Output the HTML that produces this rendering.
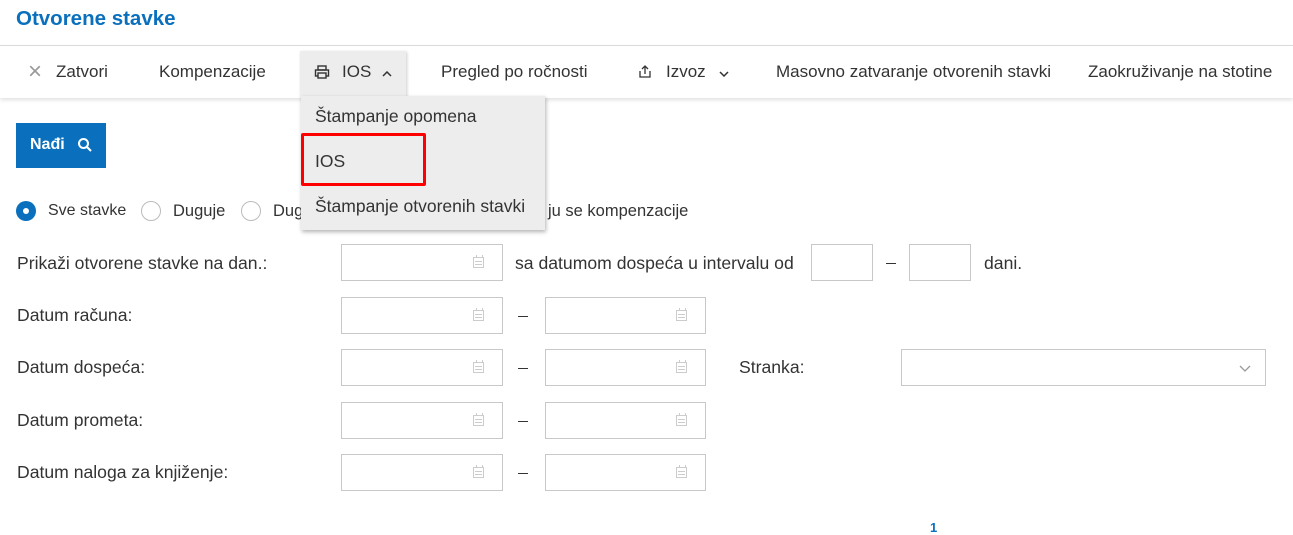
<!DOCTYPE html><html><head><style>
body{margin:0;width:1293px;height:530px;background:#fff;font-family:"Liberation Sans",sans-serif;color:#333;position:relative;overflow:hidden}
.a{position:absolute;white-space:nowrap}
.t{font-size:17px;line-height:20px}
.l{font-size:17.6px;line-height:20px}
.in{position:absolute;border:1px solid #c8c8c8;background:#fff;box-sizing:border-box;height:37px}
.cal{position:absolute;right:18px;top:12px;width:11px;height:11px;border:1px solid #ccc;box-sizing:border-box}
.cal:before{content:"";position:absolute;left:1px;right:1px;top:3px;height:1px;background:#ccc;box-shadow:0 3px 0 #ccc}
.cal:after{content:"";position:absolute;left:2px;top:-3px;width:5px;height:2px;border-left:1px solid #ccc;border-right:1px solid #ccc}
.dash{position:absolute;width:10px;height:1px;background:#333}
</style></head><body>
<div class="a" style="left:16px;top:7px;font-size:20.5px;font-weight:bold;color:#0a70bd">Otvorene stavke</div>
<div class="a" style="left:0;top:45px;width:1293px;height:1px;background:#ddd"></div>
<div class="a" style="left:0;top:46px;width:1293px;height:52px;background:#fff;box-shadow:0 2px 4px rgba(0,0,0,.12)"></div>
<div class="a" style="left:300px;top:51px;width:106px;height:46px;background:#ededed;box-shadow:1px 1px 3px rgba(0,0,0,.2)"></div>
<div class="a" style="left:28px;top:60px;color:#999;font-size:24px;line-height:24px">×</div>
<div class="a t" style="left:56px;top:62px">Zatvori</div>
<div class="a t" style="left:159px;top:62px">Kompenzacije</div>
<svg class="a" style="left:314px;top:65px" width="16" height="14" viewBox="0 0 16 14" fill="none" stroke="#333" stroke-width="1.4"><rect x="4" y="1" width="8" height="4"/><rect x="1.5" y="5" width="13" height="6"/><rect x="4" y="8" width="8" height="5" fill="#ededed"/></svg>
<div class="a t" style="left:342px;top:62px">IOS</div>
<svg class="a" style="left:382px;top:71px" width="10" height="6"><path d="M1 5L5 1L9 5" stroke="#333" fill="none" stroke-width="1.5"/></svg>
<div class="a t" style="left:441px;top:62px">Pregled po ročnosti</div>
<svg class="a" style="left:638px;top:64px" width="14" height="14" fill="none" stroke="#333" stroke-width="1.3"><path d="M7 10V2M4 5l3-3 3 3M2 7v6h10V7"/></svg>
<div class="a t" style="left:666px;top:62px">Izvoz</div>
<svg class="a" style="left:719px;top:71px" width="10" height="6"><path d="M1 1L5 5L9 1" stroke="#333" fill="none" stroke-width="1.5"/></svg>
<div class="a t" style="left:776px;top:62px">Masovno zatvaranje otvorenih stavki</div>
<div class="a t" style="left:1088px;top:62px">Zaokruživanje na stotine</div>

<div class="a" style="left:16px;top:123px;width:90px;height:45px;background:#0a70bd"></div>
<div class="a" style="left:30px;top:136px;color:#fff;font-weight:bold;font-size:16px">Nađi</div>
<svg class="a" style="left:77px;top:137px" width="16" height="16" fill="none" stroke="#fff" stroke-width="2"><circle cx="6.5" cy="6.5" r="4.5"/><path d="M10 10l4 4"/></svg>

<div class="a" style="left:16px;top:201px;width:20px;height:20px;border-radius:50%;background:#0a70bd"></div>
<div class="a" style="left:23px;top:208px;width:6px;height:6px;border-radius:50%;background:#fff"></div>
<div class="a t" style="left:48px;top:201px;font-size:16px">Sve stavke</div>
<div class="a" style="left:141px;top:201px;width:18px;height:18px;border-radius:50%;border:1px solid #bbb"></div>
<div class="a t" style="left:173px;top:201px;font-size:16.5px">Duguje</div>
<div class="a" style="left:241px;top:201px;width:18px;height:18px;border-radius:50%;border:1px solid #bbb"></div>
<div class="a t" style="left:273px;top:201px;font-size:16.5px">Duguje</div>
<div class="a t" style="left:548px;top:201px;font-size:16.5px">ju se kompenzacije</div>

<div class="a" style="left:301px;top:96px;width:244px;height:134px;background:#ededed;box-shadow:1px 2px 4px rgba(0,0,0,.3)"></div>
<div class="a" style="left:315px;top:106px;font-size:17.5px">Štampanje opomena</div>
<div class="a" style="left:301px;top:133px;width:125px;height:53px;border:3px solid #f00;box-sizing:border-box;border-radius:2px"></div>
<div class="a" style="left:315px;top:151px;font-size:17.5px">IOS</div>
<div class="a" style="left:315px;top:196px;font-size:17.5px">Štampanje otvorenih stavki</div>

<div class="a l" style="left:17px;top:253px">Prikaži otvorene stavke na dan.:</div>
<div class="a l" style="left:17px;top:305px">Datum računa:</div>
<div class="a l" style="left:17px;top:357px">Datum dospeća:</div>
<div class="a l" style="left:17px;top:410px">Datum prometa:</div>
<div class="a l" style="left:17px;top:462px">Datum naloga za knjiženje:</div>

<div class="in" style="left:341px;top:244px;width:162px"><div class="cal"></div></div>
<div class="a l" style="left:515px;top:253px">sa datumom dospeća u intervalu od</div>
<div class="in" style="left:811px;top:244px;width:62px"></div>
<div class="dash" style="left:886px;top:263px"></div>
<div class="in" style="left:909px;top:244px;width:62px"></div>
<div class="a l" style="left:984px;top:253px">dani.</div>

<div class="in" style="left:341px;top:297px;width:162px"><div class="cal"></div></div><div class="dash" style="left:518px;top:316px"></div><div class="in" style="left:545px;top:297px;width:161px"><div class="cal"></div></div>
<div class="in" style="left:341px;top:349px;width:162px"><div class="cal"></div></div><div class="dash" style="left:518px;top:368px"></div><div class="in" style="left:545px;top:349px;width:161px"><div class="cal"></div></div>
<div class="in" style="left:341px;top:402px;width:162px"><div class="cal"></div></div><div class="dash" style="left:518px;top:421px"></div><div class="in" style="left:545px;top:402px;width:161px"><div class="cal"></div></div>
<div class="in" style="left:341px;top:454px;width:162px"><div class="cal"></div></div><div class="dash" style="left:518px;top:473px"></div><div class="in" style="left:545px;top:454px;width:161px"><div class="cal"></div></div>

<div class="a l" style="left:739px;top:357px">Stranka:</div>
<div class="in" style="left:901px;top:349px;width:365px"></div>
<svg class="a" style="left:1239px;top:365px" width="12" height="7"><path d="M1 1L6 6L11 1" stroke="#999" fill="none" stroke-width="1.3"/></svg>
<div class="a" style="left:930px;top:520px;font-size:13px;font-weight:bold;color:#0a70bd">1</div>
</body></html>
